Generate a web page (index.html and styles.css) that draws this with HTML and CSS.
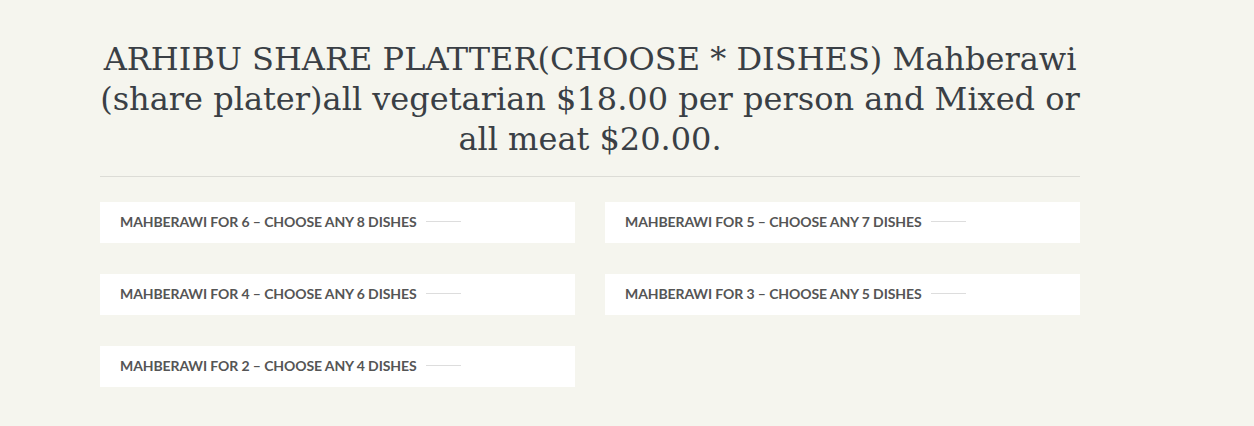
FILE: index.html
```html
<!DOCTYPE html>
<html>
<head>
<meta charset="utf-8">
<link rel="stylesheet" href="styles.css">
</head>
<body>
<div class="page">
  <h1 class="title"><span class="line">ARHIBU SHARE PLATTER(CHOOSE * DISHES) Mahberawi</span> <span class="line">(share plater)all vegetarian $18.00 per person and Mixed or</span> <span class="line">all meat $20.00.</span></h1>
  <div class="grid">
    <div class="card"><span class="label">MAHBERAWI FOR 6 – CHOOSE ANY 8 DISHES</span><span class="rule"></span></div>
    <div class="card"><span class="label">MAHBERAWI FOR 5 – CHOOSE ANY 7 DISHES</span><span class="rule"></span></div>
    <div class="card"><span class="label">MAHBERAWI FOR 4 – CHOOSE ANY 6 DISHES</span><span class="rule"></span></div>
    <div class="card"><span class="label">MAHBERAWI FOR 3 – CHOOSE ANY 5 DISHES</span><span class="rule"></span></div>
    <div class="card"><span class="label">MAHBERAWI FOR 2 – CHOOSE ANY 4 DISHES</span><span class="rule"></span></div>
  </div>
</div>
</body>
</html>
```

FILE: styles.css
```css
html, body {
  margin: 0;
  padding: 0;
  background: #f5f5ee;
}
.page {
  width: 980px;
  margin-left: 100px;
  padding-top: 39px;
}
.title {
  margin: 0;
  padding-bottom: 17px;
  border-bottom: 1px solid #dcdcd6;
  font-family: "DejaVu Serif", Georgia, serif;
  font-weight: normal;
  font-size: 32px;
  line-height: 40px;
  color: #3a3f45;
  text-align: center;
  display: flex;
  flex-direction: column;
  align-items: center;
}
.line {
  display: block;
  white-space: nowrap;
}
.grid {
  display: grid;
  grid-template-columns: 475px 475px;
  column-gap: 30px;
  row-gap: 31px;
  margin-top: 25px;
}
.card {
  background: #ffffff;
  height: 41px;
  padding: 0 20px 2px;
  display: flex;
  align-items: center;
  box-sizing: border-box;
}
.label {
  font-family: Lato, "Open Sans", sans-serif;
  font-weight: bold;
  font-size: 14px;
  color: #555555;
  letter-spacing: -0.1px;
}
.rule {
  display: block;
  width: 35px;
  height: 1px;
  background: #dddddd;
  margin-left: 9px;
}
```
